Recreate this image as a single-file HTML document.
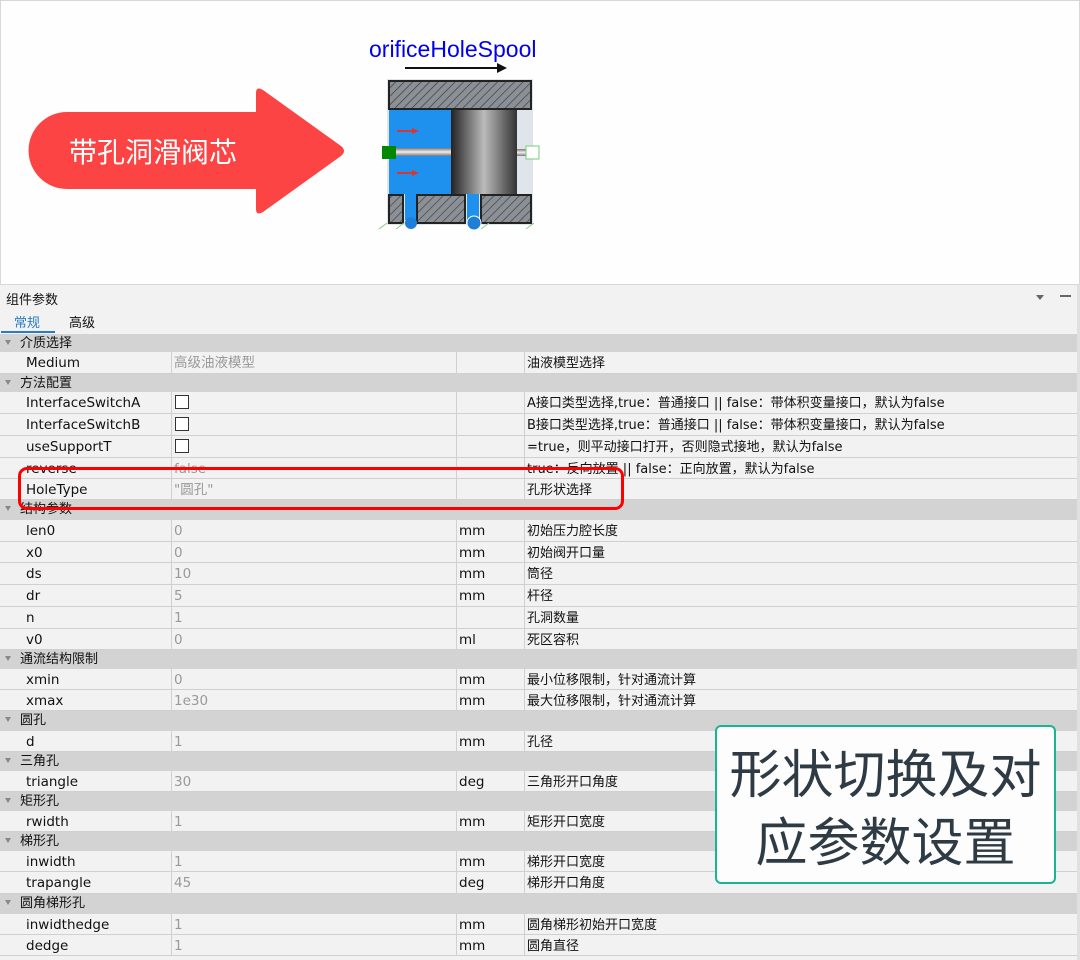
<!DOCTYPE html>
<html><head><meta charset="utf-8"><style>
*{margin:0;padding:0;box-sizing:border-box}
body{width:1080px;height:960px;overflow:hidden;background:#f2f2f2;font-family:"DejaVu Sans","Noto Sans CJK SC",sans-serif;position:relative;font-size:13px;color:#111}
#top{position:absolute;left:0;top:0;width:1080px;height:285px;background:#fefefe;border:1px solid #d8d8d8}
.r{position:absolute;left:0;width:1078px;border-bottom:1px solid #d0d0d0;line-height:21px}
.g{background:#d3d3d3;border-bottom:none;line-height:19px}
.g span{position:absolute;left:20px;top:0}
.g i{position:absolute;left:5px;top:6px;width:0;height:0;border-left:3px solid transparent;border-right:3px solid transparent;border-top:5px solid #888}
.d span{position:absolute;top:1px;white-space:nowrap}
.n{left:26px;font-size:13.5px}.v{left:174px;color:#999;font-size:13.5px}.u{left:459px;font-size:13.5px}.s{left:527px;font-size:13px}
.d:after{content:"";position:absolute;left:171px;top:0;bottom:0;border-left:1px solid #d0d0d0}
.d b{position:absolute;top:0;bottom:0;border-left:1px solid #d0d0d0}
.cb{position:absolute;left:175px;top:3px;width:14px;height:14px;border:1px solid #333;background:#fff}
</style></head><body>
<div id="top">
<svg width="1080" height="285" style="position:absolute;left:0;top:0">
<path d="M66 111 H255 V92 Q255 85 262 89 L340 145 Q346 150 340 155 L262 211 Q255 215 255 208 V188 H66 A38.5 38.5 0 0 1 66 111Z" fill="#fd4444"/>
<text x="68" y="161" font-size="28" fill="#fff" font-family="Noto Sans CJK SC,sans-serif">带孔洞滑阀芯</text>
<text x="368" y="56" font-size="23" fill="#0000ee" font-family="Liberation Sans,sans-serif">orificeHoleSpool</text>
<line x1="404" y1="67" x2="498" y2="67" stroke="#111" stroke-width="2"/><path d="M496 62 L506 67 L496 72Z" fill="#111"/>
<rect x="386" y="78" width="146" height="146" fill="#dfe5ea"/>
<defs><pattern id="h" width="6" height="6" patternUnits="userSpaceOnUse" patternTransform="rotate(45)"><rect width="6" height="6" fill="#8a9096"/><line x1="0" y1="0" x2="0" y2="6" stroke="#333" stroke-width="1.2"/></pattern>
<linearGradient id="c" x1="0" y1="0" x2="1" y2="0"><stop offset="0" stop-color="#222"/><stop offset=".5" stop-color="#bbb"/><stop offset="1" stop-color="#333"/></linearGradient>
<linearGradient id="rd" x1="0" y1="0" x2="0" y2="1"><stop offset="0" stop-color="#777"/><stop offset=".5" stop-color="#eee"/><stop offset="1" stop-color="#777"/></linearGradient></defs>
<rect x="388" y="80" width="142" height="28" fill="url(#h)" stroke="#222" stroke-width="2"/>
<rect x="388" y="109" width="62" height="84" fill="#1e90ee"/>
<rect x="450" y="109" width="66" height="84" fill="url(#c)"/>
<rect x="394" y="147" width="56" height="8" fill="url(#rd)"/>
<rect x="516" y="148" width="10" height="7" fill="url(#rd)"/>
<rect x="381" y="145" width="14" height="13" fill="#080"/>
<rect x="525" y="145" width="13" height="13" fill="#fff" stroke="#7c7"/>
<path d="M396 130 H412 M396 172 H412" stroke="#d33" stroke-width="2"/>
<path d="M411 127 L418 130 L411 133Z M411 169 L418 172 L411 175Z" fill="#d33"/>
<rect x="388" y="194" width="14" height="28" fill="url(#h)" stroke="#222" stroke-width="2"/>
<rect x="416" y="194" width="48" height="28" fill="url(#h)" stroke="#222" stroke-width="2"/>
<rect x="480" y="194" width="50" height="28" fill="url(#h)" stroke="#222" stroke-width="2"/>
<rect x="404" y="193" width="11" height="26" fill="#1e90ee"/><rect x="466" y="193" width="12" height="26" fill="#1e90ee"/>
<circle cx="410" cy="222" r="6" fill="#1e7fd8"/><circle cx="473" cy="222" r="7" fill="#1e7fd8" stroke="#fff"/>
<path d="M378 228 L386 222 M395 228 L403 222 M480 228 L488 222 M525 228 L533 222" stroke="#8c8" />
</svg>
</div>
<div style="position:absolute;left:6px;top:289px">组件参数</div>
<div style="position:absolute;left:1036px;top:295px;border-left:4px solid transparent;border-right:4px solid transparent;border-top:5px solid #666"></div>
<div style="position:absolute;left:1060px;top:295px;width:11px;height:2px;background:#666"></div>
<div style="position:absolute;left:14px;top:312px;color:#2a7bc4">常规</div>
<div style="position:absolute;left:1px;top:331px;width:54px;height:2px;background:#2a7bc4"></div>
<div style="position:absolute;left:69px;top:312px">高级</div>

<div class="r g" style="top:334px;height:18px"><i></i><span>介质选择</span></div>
<div class="r d" style="top:352px;height:22px"><b style="left:456px"></b><b style="left:524px"></b><span class="n">Medium</span><span class="v">高级油液模型</span><span class="s">油液模型选择</span></div>
<div class="r g" style="top:374px;height:18px"><i></i><span>方法配置</span></div>
<div class="r d" style="top:392px;height:22px"><b style="left:456px"></b><b style="left:524px"></b><span class="n">InterfaceSwitchA</span><div class="cb"></div><span class="s">A接口类型选择,true：普通接口 || false：带体积变量接口，默认为false</span></div>
<div class="r d" style="top:414px;height:22px"><b style="left:456px"></b><b style="left:524px"></b><span class="n">InterfaceSwitchB</span><div class="cb"></div><span class="s">B接口类型选择,true：普通接口 || false：带体积变量接口，默认为false</span></div>
<div class="r d" style="top:436px;height:22px"><b style="left:456px"></b><b style="left:524px"></b><span class="n">useSupportT</span><div class="cb"></div><span class="s">=true，则平动接口打开，否则隐式接地，默认为false</span></div>
<div class="r d" style="top:458px;height:21px"><b style="left:456px"></b><b style="left:524px"></b><span class="n">reverse</span><span class="v">false</span><span class="s">true：反向放置 || false：正向放置，默认为false</span></div>
<div class="r d" style="top:479px;height:21px"><b style="left:456px"></b><b style="left:524px"></b><span class="n">HoleType</span><span class="v">"圆孔"</span><span class="s">孔形状选择</span></div>
<div class="r g" style="top:500px;height:20px"><i></i><span>结构参数</span></div>
<div class="r d" style="top:520px;height:22px"><b style="left:456px"></b><b style="left:524px"></b><span class="n">len0</span><span class="v">0</span><span class="u">mm</span><span class="s">初始压力腔长度</span></div>
<div class="r d" style="top:542px;height:21px"><b style="left:456px"></b><b style="left:524px"></b><span class="n">x0</span><span class="v">0</span><span class="u">mm</span><span class="s">初始阀开口量</span></div>
<div class="r d" style="top:563px;height:22px"><b style="left:456px"></b><b style="left:524px"></b><span class="n">ds</span><span class="v">10</span><span class="u">mm</span><span class="s">筒径</span></div>
<div class="r d" style="top:585px;height:22px"><b style="left:456px"></b><b style="left:524px"></b><span class="n">dr</span><span class="v">5</span><span class="u">mm</span><span class="s">杆径</span></div>
<div class="r d" style="top:607px;height:22px"><b style="left:456px"></b><b style="left:524px"></b><span class="n">n</span><span class="v">1</span><span class="s">孔洞数量</span></div>
<div class="r d" style="top:629px;height:21px"><b style="left:456px"></b><b style="left:524px"></b><span class="n">v0</span><span class="v">0</span><span class="u">ml</span><span class="s">死区容积</span></div>
<div class="r g" style="top:650px;height:19px"><i></i><span>通流结构限制</span></div>
<div class="r d" style="top:669px;height:21px"><b style="left:456px"></b><b style="left:524px"></b><span class="n">xmin</span><span class="v">0</span><span class="u">mm</span><span class="s">最小位移限制，针对通流计算</span></div>
<div class="r d" style="top:690px;height:21px"><b style="left:456px"></b><b style="left:524px"></b><span class="n">xmax</span><span class="v">1e30</span><span class="u">mm</span><span class="s">最大位移限制，针对通流计算</span></div>
<div class="r g" style="top:711px;height:20px"><i></i><span>圆孔</span></div>
<div class="r d" style="top:731px;height:21px"><b style="left:456px"></b><b style="left:524px"></b><span class="n">d</span><span class="v">1</span><span class="u">mm</span><span class="s">孔径</span></div>
<div class="r g" style="top:752px;height:19px"><i></i><span>三角孔</span></div>
<div class="r d" style="top:771px;height:21px"><b style="left:456px"></b><b style="left:524px"></b><span class="n">triangle</span><span class="v">30</span><span class="u">deg</span><span class="s">三角形开口角度</span></div>
<div class="r g" style="top:792px;height:19px"><i></i><span>矩形孔</span></div>
<div class="r d" style="top:811px;height:21px"><b style="left:456px"></b><b style="left:524px"></b><span class="n">rwidth</span><span class="v">1</span><span class="u">mm</span><span class="s">矩形开口宽度</span></div>
<div class="r g" style="top:832px;height:19px"><i></i><span>梯形孔</span></div>
<div class="r d" style="top:851px;height:21px"><b style="left:456px"></b><b style="left:524px"></b><span class="n">inwidth</span><span class="v">1</span><span class="u">mm</span><span class="s">梯形开口宽度</span></div>
<div class="r d" style="top:872px;height:22px"><b style="left:456px"></b><b style="left:524px"></b><span class="n">trapangle</span><span class="v">45</span><span class="u">deg</span><span class="s">梯形开口角度</span></div>
<div class="r g" style="top:894px;height:20px"><i></i><span>圆角梯形孔</span></div>
<div class="r d" style="top:914px;height:21px"><b style="left:456px"></b><b style="left:524px"></b><span class="n">inwidthedge</span><span class="v">1</span><span class="u">mm</span><span class="s">圆角梯形初始开口宽度</span></div>
<div class="r d" style="top:935px;height:21px"><b style="left:456px"></b><b style="left:524px"></b><span class="n">dedge</span><span class="v">1</span><span class="u">mm</span><span class="s">圆角直径</span></div>
<div style="position:absolute;left:1077px;top:285px;width:3px;height:675px;background:#e0e0e0"></div>

<div style="position:absolute;left:18px;top:467px;width:606px;height:43px;border:3px solid #f00;border-radius:9px"></div>
<div style="position:absolute;left:715px;top:725px;width:341px;height:159px;background:#fdfdfd;border:2px solid #1ab394;border-radius:6px;font-family:'Noto Sans CJK SC',sans-serif;font-size:52px;color:#2e3a44;text-align:center;line-height:68px;padding-top:10px">形状切换及对<br>应参数设置</div>
</body></html>
